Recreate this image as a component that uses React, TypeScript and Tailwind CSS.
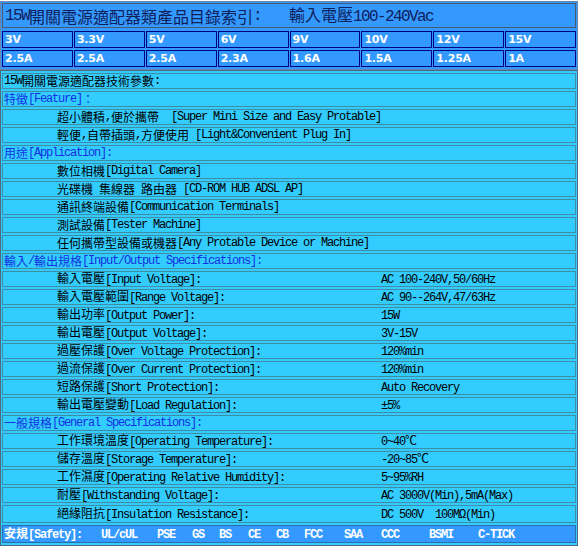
import React from 'react';

const CJK = /([\u2E80-\u9FFF\u3000-\u303F\uFF00-\uFFEF\u2100-\u214F]+)/;

function Mixed({ text }: { text: string }) {
  const parts = text.split(CJK);
  return (
    <>
      {parts.map((part, i) =>
        part === '' ? null : i % 2 === 1 ? (
          <span key={i} className="font-['Noto_Sans_CJK_TC',sans-serif] tracking-normal">
            {part}
          </span>
        ) : (
          <span key={i} className="font-['Liberation_Mono',monospace] tracking-[-0.1em]">
            {part}
          </span>
        )
      )}
    </>
  );
}

const volts = ['3V', '3.3V', '5V', '6V', '9V', '10V', '12V', '15V'];
const amps = ['2.5A', '2.5A', '2.5A', '2.3A', '1.6A', '1.5A', '1.25A', '1A'];

type Row =
  | { kind: 'plain'; text: string }
  | { kind: 'head'; text: string }
  | { kind: 'item'; text: string }
  | { kind: 'spec'; label: string; value: string; tall?: boolean };

const rows: Row[] = [
  { kind: 'plain', text: '15W開關電源適配器技術參數:' },
  { kind: 'head', text: '特徵[Feature]：' },
  { kind: 'item', text: '超小體積,便於攜帶  [Super Mini Size and Easy Protable]' },
  { kind: 'item', text: '輕便,自帶插頭,方便使用 [Light&Convenient Plug In]' },
  { kind: 'head', text: '用途[Application]:' },
  { kind: 'item', text: '數位相機[Digital Camera]' },
  { kind: 'item', text: '光碟機 集線器 路由器 [CD-ROM HUB ADSL AP]' },
  { kind: 'item', text: '通訊終端設備[Communication Terminals]' },
  { kind: 'item', text: '測試設備[Tester Machine]' },
  { kind: 'item', text: '任何攜帶型設備或機器[Any Protable Device or Machine]' },
  { kind: 'head', text: '輸入/輸出規格[Input/Output Specifications]:' },
  { kind: 'spec', label: '輸入電壓[Input Voltage]:', value: 'AC 100-240V,50/60Hz' },
  { kind: 'spec', label: '輸入電壓範圍[Range Voltage]:', value: 'AC 90--264V,47/63Hz' },
  { kind: 'spec', label: '輸出功率[Output Power]:', value: '15W' },
  { kind: 'spec', label: '輸出電壓[Output Voltage]:', value: '3V-15V' },
  { kind: 'spec', label: '過壓保護[Over Voltage Protection]:', value: '120%min' },
  { kind: 'spec', label: '過流保護[Over Current Protection]:', value: '120%min' },
  { kind: 'spec', label: '短路保護[Short Protection]:', value: 'Auto Recovery' },
  { kind: 'spec', label: '輸出電壓變動[Load Regulation]:', value: '±5%' },
  { kind: 'head', text: '一般規格[General Specifications]:' },
  { kind: 'spec', label: '工作環境溫度[Operating Temperature]:', value: '0~40℃' },
  { kind: 'spec', label: '儲存溫度[Storage Temperature]:', value: '-20~85℃' },
  { kind: 'spec', label: '工作濕度[Operating Relative Humidity]:', value: '5~95%RH' },
  { kind: 'spec', label: '耐壓[Withstanding Voltage]:', value: 'AC 3000V(Min),5mA(Max)' },
  { kind: 'spec', label: '絕緣阻抗[Insulation Resistance]:', value: 'DC 500V  100MΩ(Min)', tall: true },
];

const safety: [string, string][] = [
  ['安規[Safety]:', 'w-[97px]'],
  ['UL/cUL', 'w-[56px]'],
  ['PSE', 'w-[35px]'],
  ['GS', 'w-[27px]'],
  ['BS', 'w-[29px]'],
  ['CE', 'w-[28px]'],
  ['CB', 'w-[28px]'],
  ['FCC', 'w-[40px]'],
  ['SAA', 'w-[37px]'],
  ['CCC', 'w-[48px]'],
  ['BSMI', 'w-[49px]'],
  ['C-TICK', 'w-[60px]'],
];

export default function App() {
  return (
    <div className="w-[578px] bg-white pt-[1px] text-[12px] leading-[14px]">
      {/* product index */}
      <div className="border border-[#6a86b0] bg-[#3399ff] p-[1px]">
        <div className="flex h-[25px] items-center whitespace-pre border border-[#4a5a70] pl-[2px] text-[16px] leading-[18px] text-[#10205a]">
          <Mixed text="15W開關電源適配器類產品目錄索引:" />
          <span className="ml-[28px]">
            <Mixed text="輸入電壓100-240Vac" />
          </span>
        </div>
        <div className="mt-[3px] grid grid-cols-8 gap-x-[1px] gap-y-[2px] pb-[1px]">
          {[...volts, ...amps].map((v, i) => (
            <div
              key={i}
              className="flex h-[17px] items-center border border-[#000080] pl-[2px] font-['DejaVu_Sans',sans-serif] text-[11px] font-bold tracking-[-0.2px] text-white"
            >
              {v}
            </div>
          ))}
        </div>
      </div>

      {/* technical parameters */}
      <div className="flex flex-col gap-[2px] border border-[#4d6a7a] bg-[#33ccff] px-[1px] py-[2px]">
        {rows.map((r, i) => {
          if (r.kind === 'spec') {
            return (
              <div
                key={i}
                className={`flex items-center whitespace-pre border border-[#3f8ca8] pl-[54px] text-black ${r.tall ? 'h-[18px]' : 'h-[16px]'}`}
              >
                <span className="w-[324px] shrink-0">
                  <Mixed text={r.label} />
                </span>
                <span>
                  <Mixed text={r.value} />
                </span>
              </div>
            );
          }
          return (
            <div
              key={i}
              className={`flex h-[16px] items-center whitespace-pre border border-[#3f8ca8] ${
                r.kind === 'head' ? 'pl-[1px] text-[#1330e0]' : r.kind === 'item' ? 'pl-[54px] text-black' : 'pl-[1px] text-black'
              }`}
            >
              <Mixed text={r.text} />
            </div>
          );
        })}
        <div className="flex h-[18px] items-center whitespace-pre border border-[#2c6fb0] bg-[#3399ff] pl-[1px] font-bold text-white">
          {safety.map(([t, w], i) => (
            <span key={i} className={`${w} shrink-0`}>
              <Mixed text={t} />
            </span>
          ))}
        </div>
      </div>
    </div>
  );
}
